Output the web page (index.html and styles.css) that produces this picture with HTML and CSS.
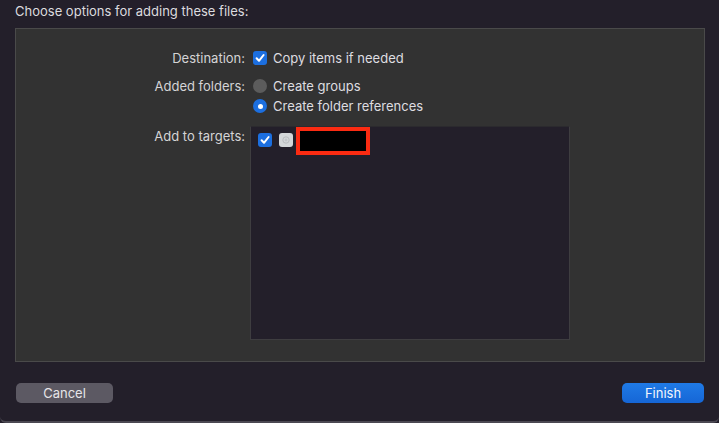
FILE: index.html
```html
<!DOCTYPE html>
<html>
<head>
<meta charset="utf-8">
<link rel="stylesheet" href="styles.css">
</head>
<body>
<div class="window">
  <div class="title">Choose options for adding these files:</div>
  <div class="panel">
    <div class="form">
      <div class="label">Destination:</div>
      <div class="field">
        <label class="opt"><span class="check on"><svg viewBox="0 0 14 14"><path d="M3.6 7.3 L6 9.8 L10.6 4" fill="none" stroke="#fff" stroke-width="2" stroke-linecap="round" stroke-linejoin="round"/></svg></span>Copy items if needed</label>
      </div>
      <div class="label">Added folders:</div>
      <div class="field stack">
        <label class="opt"><span class="radio"></span>Create groups</label>
        <label class="opt"><span class="radio on"></span>Create folder references</label>
      </div>
      <div class="label targets-label">Add to targets:</div>
      <div class="field">
        <div class="targets">
          <div class="target-row">
            <span class="check on"><svg viewBox="0 0 14 14"><path d="M3.6 7.3 L6 9.8 L10.6 4" fill="none" stroke="#fff" stroke-width="2" stroke-linecap="round" stroke-linejoin="round"/></svg></span>
            <span class="app-icon"><svg viewBox="0 0 14 14"><circle cx="7" cy="7" r="3.2" fill="none" stroke="#b9bcbf" stroke-width="1"/><circle cx="7" cy="7" r="1.4" fill="#c3c6c9"/></svg></span>
            <span class="redacted"></span>
          </div>
        </div>
      </div>
    </div>
  </div>
  <div class="actions">
    <button class="btn cancel">Cancel</button>
    <button class="btn finish">Finish</button>
  </div>
</div>
</body>
</html>
```

FILE: styles.css
```css
* { box-sizing: border-box; }
html, body {
  margin: 0;
  padding: 0;
  background: #231f2a;
  width: 719px;
  height: 423px;
  overflow: hidden;
}
body {
  font-family: Inter, "Liberation Sans", Arial, sans-serif;
  font-size: 13px;
  color: #dedde0;
}
.window {
  height: 423px;
  display: flex;
  flex-direction: column;
  border-bottom: 2px solid #4b4852;
  border-radius: 0 0 6px 6px;
}
.title {
  padding: 3px 0 0 15px;
  height: 28px;
  line-height: 17px;
  color: #dcdbdf;
}
.panel {
  margin: 0 14px 0 15px;
  height: 334px;
  background: #323232;
  border: 1px solid #4a4a4a;
  padding-top: 19px;
}
.form {
  display: grid;
  grid-template-columns: 229px 1fr;
  column-gap: 8px;
  row-gap: 8px;
}
.label {
  text-align: right;
  line-height: 20px;
  height: 20px;
  color: #d5d4d6;
}
.field { display: flex; }
.stack { flex-direction: column; }
.opt {
  display: flex;
  align-items: center;
  gap: 6px;
  height: 20px;
  color: #dedde0;
}
.check {
  width: 14px;
  height: 14px;
  border-radius: 3px;
  background: #1c6fe0;
  display: inline-flex;
  flex: none;
}
.check svg { width: 14px; height: 14px; }
.radio {
  width: 14px;
  height: 14px;
  border-radius: 50%;
  background: #5c5c5c;
  flex: none;
  position: relative;
}
.radio.on { background: #1c6fe0; }
.radio.on::after {
  content: "";
  position: absolute;
  left: 4.5px;
  top: 4.5px;
  width: 5px;
  height: 5px;
  border-radius: 50%;
  background: #fff;
}
.targets-label { margin-top: 2px; }
.targets {
  margin-left: -3px;
  margin-top: 2px;
  width: 320px;
  height: 214px;
  background: #231f2a;
  border: 1px solid #3e3d40;
  border-top-color: #2b2a2e;
  padding: 1px 0 0 7px;
}
.target-row {
  display: flex;
  align-items: center;
  height: 23px;
}
.target-row .check { margin-top: 1px; }
.app-icon {
  width: 14px;
  height: 14px;
  margin-left: 7px;
  border-radius: 3px;
  background: #d4d7d9;
  display: inline-flex;
  margin-top: 1px;
}
.app-icon svg { width: 14px; height: 14px; }
.redacted {
  margin-left: 3px;
  width: 74px;
  height: 28px;
  background: #000;
  border: 4px solid #fb2b12;
  margin-top: 3px;
}
.actions {
  display: flex;
  justify-content: space-between;
  padding: 21px 15px 0 16px;
}
.btn {
  font-family: inherit;
  font-size: 13px;
  height: 20px;
  border: none;
  border-radius: 5px;
  padding: 0;
  line-height: 20px;
}
.cancel {
  width: 97px;
  background: #5c5963;
  color: #e6e5e8;
}
.finish {
  width: 82px;
  background: linear-gradient(#1f7ae6, #1566d6);
  color: #f2f6fc;
}
```
